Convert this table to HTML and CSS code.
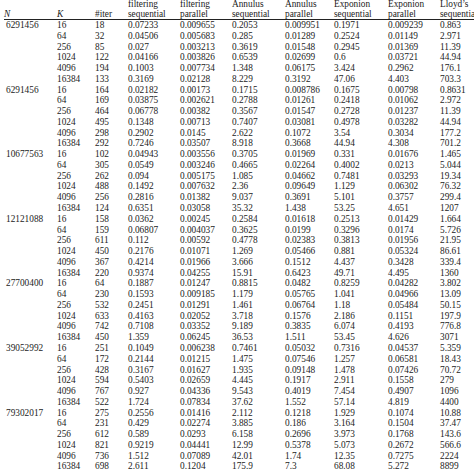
FILE: index.html
```html
<!DOCTYPE html>
<html>
<head>
<meta charset="utf-8">
<link rel="stylesheet" href="styles.css">
</head>
<body>
<table class="tbl">
<colgroup>
<col class="c-n"><col class="c-k"><col class="c-it"><col class="c-fs"><col class="c-fp"><col class="c-as"><col class="c-ap"><col class="c-es"><col class="c-ep"><col class="c-l">
</colgroup>
<thead>
<tr><th><i>N</i></th><th><i>K</i></th><th>#iter</th><th>filtering<br>sequential</th><th>filtering<br>parallel</th><th>Annulus<br>sequential</th><th>Annulus<br>parallel</th><th>Exponion<br>sequential</th><th>Exponion<br>parallel</th><th>Lloyd’s<br>sequential</th></tr>
</thead>
<tbody>
<tr><td class="nv">6291456</td><td>16</td><td>18</td><td>0.07233</td><td>0.009655</td><td>0.2053</td><td>0.009951</td><td>0.1971</td><td>0.009239</td><td>0.863</td></tr>
<tr><td></td><td>64</td><td>32</td><td>0.04506</td><td>0.005683</td><td>0.285</td><td>0.01289</td><td>0.2524</td><td>0.01149</td><td>2.971</td></tr>
<tr><td></td><td>256</td><td>85</td><td>0.027</td><td>0.003213</td><td>0.3619</td><td>0.01548</td><td>0.2945</td><td>0.01369</td><td>11.39</td></tr>
<tr><td></td><td>1024</td><td>122</td><td>0.04166</td><td>0.003826</td><td>0.6539</td><td>0.02699</td><td>0.6</td><td>0.03721</td><td>44.94</td></tr>
<tr><td></td><td>4096</td><td>194</td><td>0.1003</td><td>0.007734</td><td>1.348</td><td>0.06175</td><td>3.424</td><td>0.2962</td><td>176.1</td></tr>
<tr><td></td><td>16384</td><td>133</td><td>0.3169</td><td>0.02128</td><td>8.229</td><td>0.3192</td><td>47.06</td><td>4.403</td><td>703.3</td></tr>
<tr><td class="nv">6291456</td><td>16</td><td>164</td><td>0.02182</td><td>0.00173</td><td>0.1715</td><td>0.008786</td><td>0.1675</td><td>0.00798</td><td>0.8631</td></tr>
<tr><td></td><td>64</td><td>169</td><td>0.03875</td><td>0.002621</td><td>0.2788</td><td>0.01261</td><td>0.2418</td><td>0.01062</td><td>2.972</td></tr>
<tr><td></td><td>256</td><td>464</td><td>0.06778</td><td>0.00382</td><td>0.3567</td><td>0.01547</td><td>0.2728</td><td>0.01237</td><td>11.39</td></tr>
<tr><td></td><td>1024</td><td>495</td><td>0.1348</td><td>0.00713</td><td>0.7407</td><td>0.03081</td><td>0.4978</td><td>0.03282</td><td>44.94</td></tr>
<tr><td></td><td>4096</td><td>298</td><td>0.2902</td><td>0.0145</td><td>2.622</td><td>0.1072</td><td>3.54</td><td>0.3034</td><td>177.2</td></tr>
<tr><td></td><td>16384</td><td>292</td><td>0.7246</td><td>0.03507</td><td>8.918</td><td>0.3668</td><td>44.94</td><td>4.308</td><td>701.2</td></tr>
<tr><td class="nv">10677563</td><td>16</td><td>102</td><td>0.04943</td><td>0.003556</td><td>0.3705</td><td>0.01969</td><td>0.331</td><td>0.01676</td><td>1.465</td></tr>
<tr><td></td><td>64</td><td>305</td><td>0.0549</td><td>0.003246</td><td>0.4665</td><td>0.02264</td><td>0.4002</td><td>0.0213</td><td>5.044</td></tr>
<tr><td></td><td>256</td><td>262</td><td>0.094</td><td>0.005175</td><td>1.085</td><td>0.04662</td><td>0.7481</td><td>0.03293</td><td>19.34</td></tr>
<tr><td></td><td>1024</td><td>488</td><td>0.1492</td><td>0.007632</td><td>2.36</td><td>0.09649</td><td>1.129</td><td>0.06302</td><td>76.32</td></tr>
<tr><td></td><td>4096</td><td>256</td><td>0.2816</td><td>0.01382</td><td>9.037</td><td>0.3691</td><td>5.101</td><td>0.3757</td><td>299.4</td></tr>
<tr><td></td><td>16384</td><td>124</td><td>0.6351</td><td>0.03058</td><td>35.32</td><td>1.438</td><td>53.25</td><td>4.651</td><td>1207</td></tr>
<tr><td class="nv">12121088</td><td>16</td><td>158</td><td>0.0362</td><td>0.00245</td><td>0.2584</td><td>0.01618</td><td>0.2513</td><td>0.01429</td><td>1.664</td></tr>
<tr><td></td><td>64</td><td>159</td><td>0.06807</td><td>0.004037</td><td>0.3625</td><td>0.0199</td><td>0.3296</td><td>0.0174</td><td>5.726</td></tr>
<tr><td></td><td>256</td><td>611</td><td>0.112</td><td>0.00592</td><td>0.4778</td><td>0.02383</td><td>0.3813</td><td>0.01956</td><td>21.95</td></tr>
<tr><td></td><td>1024</td><td>450</td><td>0.2176</td><td>0.01071</td><td>1.269</td><td>0.05466</td><td>0.881</td><td>0.05324</td><td>86.61</td></tr>
<tr><td></td><td>4096</td><td>367</td><td>0.4214</td><td>0.01966</td><td>3.666</td><td>0.1512</td><td>4.437</td><td>0.3428</td><td>339.4</td></tr>
<tr><td></td><td>16384</td><td>220</td><td>0.9374</td><td>0.04255</td><td>15.91</td><td>0.6423</td><td>49.71</td><td>4.495</td><td>1360</td></tr>
<tr><td class="nv">27700400</td><td>16</td><td>64</td><td>0.1887</td><td>0.01247</td><td>0.8815</td><td>0.0482</td><td>0.8259</td><td>0.04282</td><td>3.802</td></tr>
<tr><td></td><td>64</td><td>230</td><td>0.1593</td><td>0.009185</td><td>1.179</td><td>0.05765</td><td>1.041</td><td>0.04966</td><td>13.09</td></tr>
<tr><td></td><td>256</td><td>532</td><td>0.2451</td><td>0.01291</td><td>1.461</td><td>0.06764</td><td>1.18</td><td>0.05484</td><td>50.15</td></tr>
<tr><td></td><td>1024</td><td>633</td><td>0.4163</td><td>0.02052</td><td>3.718</td><td>0.1576</td><td>2.186</td><td>0.1151</td><td>197.9</td></tr>
<tr><td></td><td>4096</td><td>742</td><td>0.7108</td><td>0.03352</td><td>9.189</td><td>0.3835</td><td>6.074</td><td>0.4193</td><td>776.8</td></tr>
<tr><td></td><td>16384</td><td>450</td><td>1.359</td><td>0.06245</td><td>36.53</td><td>1.511</td><td>53.45</td><td>4.626</td><td>3071</td></tr>
<tr><td class="nv">39052992</td><td>16</td><td>251</td><td>0.1049</td><td>0.006238</td><td>0.7461</td><td>0.05032</td><td>0.7316</td><td>0.04537</td><td>5.359</td></tr>
<tr><td></td><td>64</td><td>172</td><td>0.2144</td><td>0.01215</td><td>1.475</td><td>0.07546</td><td>1.257</td><td>0.06581</td><td>18.43</td></tr>
<tr><td></td><td>256</td><td>428</td><td>0.3167</td><td>0.01627</td><td>1.935</td><td>0.09148</td><td>1.478</td><td>0.07426</td><td>70.72</td></tr>
<tr><td></td><td>1024</td><td>594</td><td>0.5403</td><td>0.02659</td><td>4.445</td><td>0.1917</td><td>2.911</td><td>0.1558</td><td>279</td></tr>
<tr><td></td><td>4096</td><td>767</td><td>0.927</td><td>0.04336</td><td>9.543</td><td>0.4019</td><td>7.454</td><td>0.4907</td><td>1096</td></tr>
<tr><td></td><td>16384</td><td>522</td><td>1.724</td><td>0.07834</td><td>37.62</td><td>1.552</td><td>57.14</td><td>4.819</td><td>4400</td></tr>
<tr><td class="nv">79302017</td><td>16</td><td>275</td><td>0.2556</td><td>0.01416</td><td>2.112</td><td>0.1218</td><td>1.929</td><td>0.1074</td><td>10.88</td></tr>
<tr><td></td><td>64</td><td>231</td><td>0.429</td><td>0.02274</td><td>3.885</td><td>0.186</td><td>3.164</td><td>0.1504</td><td>37.47</td></tr>
<tr><td></td><td>256</td><td>612</td><td>0.589</td><td>0.0293</td><td>6.158</td><td>0.2696</td><td>3.973</td><td>0.1768</td><td>143.6</td></tr>
<tr><td></td><td>1024</td><td>821</td><td>0.9219</td><td>0.04441</td><td>12.99</td><td>0.5378</td><td>5.073</td><td>0.2672</td><td>566.6</td></tr>
<tr><td></td><td>4096</td><td>736</td><td>1.512</td><td>0.07089</td><td>42.01</td><td>1.74</td><td>12.35</td><td>0.7275</td><td>2224</td></tr>
<tr><td></td><td>16384</td><td>698</td><td>2.611</td><td>0.1204</td><td>175.9</td><td>7.3</td><td>68.08</td><td>5.272</td><td>8899</td></tr>
</tbody>
</table>
</body>
</html>
```
FILE: styles.css
```css
html, body {
  margin: 0;
  padding: 0;
  overflow: hidden;
  background: #ffffff;
}
body {
  font-family: "Liberation Serif", "Times New Roman", serif;
  font-size: 9.3px;
  color: #222222;
}
.tbl {
  border-collapse: separate;
  border-spacing: 0;
  table-layout: fixed;
  width: 496px;
  margin: -1px 0 0 4px;
}
.c-n { width: 53px; }
.c-k { width: 38px; }
.c-it { width: 33px; }
.c-fs { width: 52px; }
.c-fp { width: 52px; }
.c-as { width: 53px; }
.c-ap { width: 49px; }
.c-es { width: 54px; }
.c-ep { width: 52px; }
.c-l { width: 60px; }
.tbl th {
  font-weight: normal;
  text-align: left;
  vertical-align: bottom;
  line-height: 10px;
  padding: 0;
  border-bottom: 1px solid #222222;
  white-space: nowrap;
}
.tbl td {
  padding: 0;
  line-height: 10.76px;
  white-space: nowrap;
  vertical-align: top;
}
.tbl td.nv {
  padding-left: 2px;
}
```
